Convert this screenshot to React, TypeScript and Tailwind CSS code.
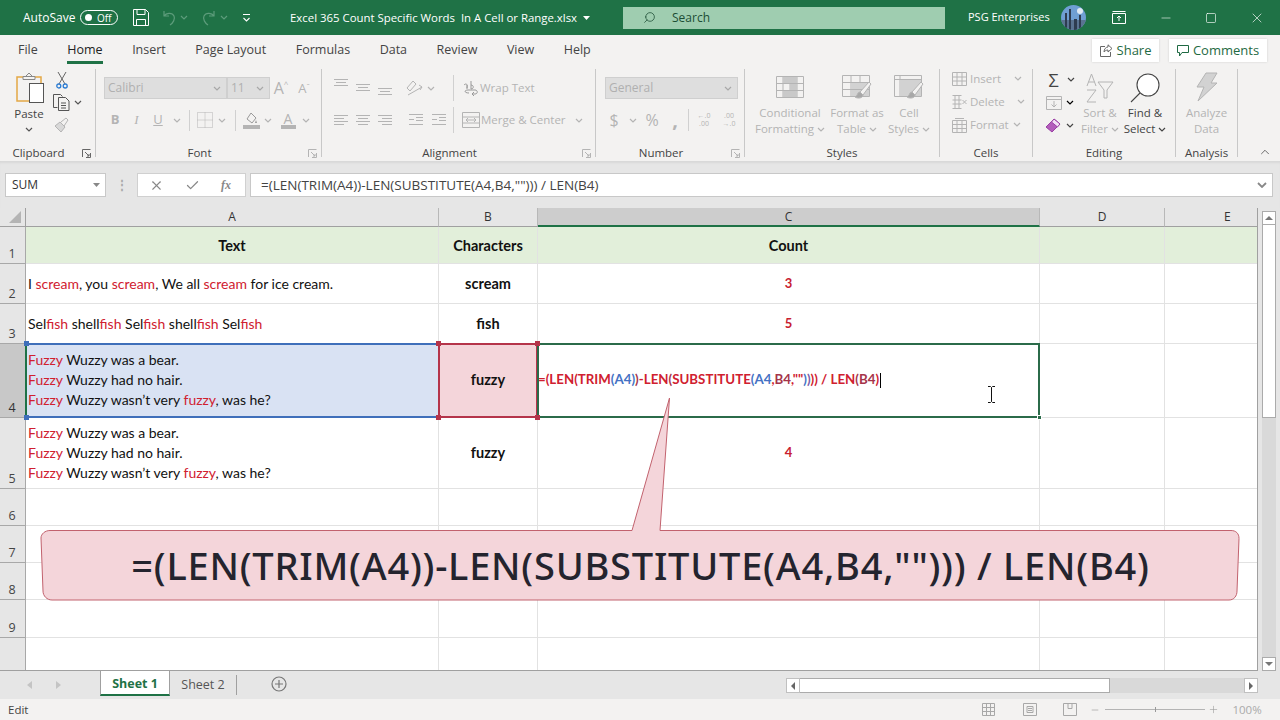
import React from "react";
import { Search, Minus, Square, X, Check, ChevronUp, Plus } from "lucide-react";

const Chev = ({ className = "text-[#b4b4b4]" }: { className?: string }) => (
  <svg width="8" height="5" viewBox="0 0 8 5" className={className} fill="none" stroke="currentColor" strokeWidth="1.2">
    <path d="M1 1l3 3 3-3" />
  </svg>
);

const Launcher = ({ dark = false }: { dark?: boolean }) => (
  <svg width="9" height="9" viewBox="0 0 9 9" fill="none" stroke={dark ? "#666" : "#b4b4b4"} strokeWidth="1">
    <path d="M.5 8V.5H8.5M8.5 4v4.5H4M3 3l4 4M7 5v2H5" />
  </svg>
);

const Lines = ({ lines }: { lines: number[][] }) => (
  <svg width="18" height="20" viewBox="0 0 18 20" stroke="#b4b4b4" strokeWidth="1">
    {lines.map(([a, b, y], i) => (
      <path key={i} d={`M${a} ${y}.5H${b}`} />
    ))}
  </svg>
);

const Sep = ({ className = "h-[22px]" }: { className?: string }) => <div className={`w-px bg-[#d0d0d0] ${className}`} />;

const Brush = ({ x, y }: { x: number; y: number }) => (
  <g transform={`translate(${x} ${y})`}>
    <path d="M14 0L5 10l3 3 8-11z" fill="#f3f2f1" stroke="#b4b4b4" />
    <path d="M5 10c-3 0-2 4-5 5 3 2 8 1 8-2z" fill="#a8a8a8" />
  </g>
);

const Group = ({ w, label, launcher, children }: { w: string; label: string; launcher?: boolean; children: React.ReactNode }) => (
  <div className={`${w} h-[88px] border-r border-[#c8c8c8] shrink-0`}>
    <div className="h-[78px] flow-root">{children}</div>
    <div className="flex h-[10px] leading-[12px] text-[#444] text-[11.5px]">
      <div className="flex-1 text-center">{label}</div>
      {launcher && (
        <div className="w-[18px] flex justify-center pt-[2px] h-[12px]">
          <Launcher dark={label === "Clipboard"} />
        </div>
      )}
    </div>
  </div>
);

const Combo = ({ w, text }: { w: string; text: string }) => (
  <div className={`${w} h-[22px] bg-[#dedede] border border-[#cfcfcf] flex items-center justify-between px-[3px] text-[#b0b0b0] text-[12px]`}>
    <span>{text}</span>
    <Chev className="text-[#a8a8a8] mr-[2px]" />
  </div>
);

function TitleBar() {
  return (
    <div className="h-[35px] bg-[#1f7246] flex items-center text-white text-[12px] shrink-0">
      <div className="w-[623px] flex items-center shrink-0 pl-[23px]">
        <span className="w-[57px]">AutoSave</span>
        <div className="w-[38px] h-[15px] rounded-full border border-white flex items-center pl-[4px]">
          <div className="w-[7px] h-[7px] rounded-full bg-white" />
          <span className="text-[10px] ml-[5px] leading-none">Off</span>
        </div>
        <svg width="16" height="17" viewBox="0 0 16 17" className="ml-[15px]" fill="none" stroke="#fff" strokeWidth="1">
          <path d="M.5.5h12l3 3v13H.5zM4 .5v5h8v-5M3.5 16.5v-6h9v6" />
        </svg>
        <svg width="16" height="16" viewBox="0 0 16 16" className="ml-[12px] text-[#5d9c7b]" fill="none" stroke="currentColor" strokeWidth="1.2">
          <path d="M3 1v5h5M3 6c2-3 8-4 10 0 1.5 3-1 7-4 9" />
        </svg>
        <Chev className="ml-[3px] text-[#5d9c7b]" />
        <svg width="16" height="16" viewBox="0 0 16 16" className="ml-[13px] text-[#5d9c7b]" fill="none" stroke="currentColor" strokeWidth="1.2">
          <path d="M13 1v5H8M13 6C11 3 5 2 3 6c-1.5 3 1 7 4 9" />
        </svg>
        <Chev className="ml-[3px] text-[#5d9c7b]" />
        <svg width="9" height="8" viewBox="0 0 9 8" className="ml-[14px]" fill="none" stroke="#fff" strokeWidth="1.1">
          <path d="M1 .5h7M1.5 4l3 3 3-3" />
        </svg>
        <span className="ml-[39px] whitespace-pre text-[11.4px]">Excel 365 Count Specific Words  In A Cell or Range.xlsx</span>
        <svg width="7" height="4" viewBox="0 0 7 4" className="ml-[6px]" fill="#fff">
          <path d="M0 0h7L3.5 4z" />
        </svg>
      </div>
      <div className="w-[322px] h-[22px] bg-[#9fcdb0] flex items-center pl-[20px] text-[#1d4d35] shrink-0">
        <Search size={13} strokeWidth={1.4} className="-scale-x-100" />
        <span className="ml-[16px]">Search</span>
      </div>
      <span className="ml-[23px] whitespace-nowrap text-[11px]">PSG Enterprises</span>
      <svg width="25" height="25" viewBox="0 0 25 25" className="ml-[11px] shrink-0">
        <defs>
          <clipPath id="av">
            <circle cx="12.5" cy="12.5" r="12.5" />
          </clipPath>
        </defs>
        <g clipPath="url(#av)">
          <rect width="25" height="25" fill="#6f9fd4" />
          <rect y="15" width="25" height="10" fill="#5a7391" />
          <path d="M4 25V8h2v17zM8 25V4h2v21zM13 25V14h3v11zM18 25V10h2v15z" fill="#2e3c50" />
          <circle cx="19" cy="6" r="3" fill="#dfe9f4" />
        </g>
      </svg>
      <svg width="14" height="13" viewBox="0 0 14 13" className="ml-[26px]" fill="none" stroke="#fff" strokeWidth="1">
        <path d="M.5 2.5h13v10H.5zM.5.5h13M7 10V5M5 7l2-2 2 2" />
      </svg>
      <Minus size={14} strokeWidth={1} className="ml-[33px]" />
      <Square size={12} strokeWidth={1.3} className="ml-[32px]" />
      <X size={16} strokeWidth={1} className="ml-[32px]" />
    </div>
  );
}

function TabsRow() {
  return (
    <div className="h-[30px] flex items-center pl-[18px] pt-[1px] gap-[29.5px] text-[12.5px] text-[#444] relative shrink-0">
      <span>File</span>
      <span className="relative text-[#222]">
        Home
        <span className="absolute left-0 right-0 top-[20px] h-[2.5px] bg-[#1f7246]" />
      </span>
      <span>Insert</span>
      <span>Page Layout</span>
      <span>Formulas</span>
      <span>Data</span>
      <span>Review</span>
      <span>View</span>
      <span>Help</span>
      <div className="ml-auto flex gap-[10px] pr-[13px]">
        <div className="w-[67px] h-[23px] bg-white shadow-[0_0_2px_#ccc] flex items-center justify-center gap-[4px] text-[#1f6a43] text-[13px]">
          <svg width="13" height="13" viewBox="0 0 13 13" fill="none" stroke="#666" strokeWidth="1">
            <path d="M5 2.5H.5v10h10V8M4 8c0-3 2-5 4-5V.8l4 3.7-4 3.5V6C6 6 5 7 4 8z" />
          </svg>
          Share
        </div>
        <div className="w-[98px] h-[23px] bg-white shadow-[0_0_2px_#ccc] flex items-center justify-center gap-[4px] text-[#1f6a43] text-[13px]">
          <svg width="12" height="12" viewBox="0 0 12 12" fill="none" stroke="#1f6a43" strokeWidth="1">
            <path d="M.5.5h11v7H5L2.5 11V7.5h-2z" />
          </svg>
          Comments
        </div>
      </div>
    </div>
  );
}

function Ribbon() {
  return (
    <div className="h-[96px] flex pt-[4px] text-[11.5px] whitespace-nowrap shrink-0">
      <Group w="w-[96px]" label="Clipboard" launcher>
        <div className="flex">
          <div className="w-[58px] flex flex-col items-center text-[#444]">
            <svg width="30" height="31" viewBox="0 0 30 31" fill="none" className="mt-[3px] ml-[1px]">
              <path d="M2 5h24v24H2z" fill="#f3f2f1" stroke="#e4a845" strokeWidth="1.5" />
              <path d="M10 5l4-4 4 4" fill="#f3f2f1" stroke="#888" />
              <path d="M8 4.5h12v3H8z" fill="#f3f2f1" stroke="#888" />
              <rect x="14.5" y="11.5" width="14" height="19" fill="#fff" stroke="#555" />
            </svg>
            <span className="mt-[3px] leading-[16px]">Paste</span>
            <Chev className="text-[#555] mt-[5px]" />
          </div>
          <div className="flex flex-col w-[36px]">
            <svg width="12" height="18" viewBox="0 0 12 18" fill="none" className="ml-[-2px] mt-[2px]">
              <path d="M2 1l7 12M10 1L3 13" stroke="#666" />
              <circle cx="2.8" cy="15" r="2" stroke="#2b7cd3" strokeWidth="1.3" />
              <circle cx="9.2" cy="15" r="2" stroke="#2b7cd3" strokeWidth="1.3" />
            </svg>
            <div className="flex items-center mt-[5px] -ml-[5px]">
              <svg width="17" height="17" viewBox="0 0 17 17" fill="none" stroke="#555" strokeWidth="1">
                <path d="M4.5 13.5H.5V.5h7l2 2M5.5 3.5h7L16 7v9.5H5.5zM8 9h5M8 11.5h5M8 14h5" />
              </svg>
              <Chev className="ml-[4px] text-[#555]" />
            </div>
            <svg width="15" height="16" viewBox="0 0 15 16" fill="none" className="mt-[6px] -ml-[4px]">
              <path d="M1 9l5-4 5 5-4 5C5 13 3 11 1 9z" fill="#d8d8d8" stroke="#b4b4b4" />
              <path d="M7 5l5-4 2 2-4 6" stroke="#b4b4b4" />
            </svg>
          </div>
        </div>
      </Group>

      <Group w="w-[226px]" label="Font" launcher>
        <div className="flex items-center mt-[8px] pl-[8px]">
          <Combo w="w-[123px]" text="Calibri" />
          <Combo w="w-[43px]" text="11" />
          <div className="w-[22px] flex justify-center text-[#b4b4b4] text-[16px] leading-none">A<span className="text-[8px]">^</span></div>
          <div className="w-[24px] flex justify-center text-[#b4b4b4] text-[13px] leading-none">A<span className="text-[8px]">ˇ</span></div>
        </div>
        <div className="flex items-center mt-[10px] h-[22px] pl-[8px] text-[#b4b4b4]">
          <div className="w-[22px] text-center font-bold text-[13px]">B</div>
          <div className="w-[21px] text-center italic text-[13px] font-['Liberation_Serif',serif]">I</div>
          <div className="w-[22px] text-center underline text-[13px]">U</div>
          <div className="w-[16px] flex justify-center"><Chev /></div>
          <Sep className="ml-[4px] h-[21px]" />
          <div className="ml-[3px] w-[24px] flex justify-center">
            <svg width="16" height="16" viewBox="0 0 16 16" fill="none" stroke="#b4b4b4" strokeDasharray="1 1">
              <path d="M.5.5h15v15H.5zM8 .5v15M.5 8h15" />
            </svg>
          </div>
          <div className="w-[10px] flex justify-center"><Chev /></div>
          <Sep className="ml-[8px] h-[21px]" />
          <div className="ml-[5px] w-[20px] flex justify-center">
            <svg width="17" height="17" viewBox="0 0 17 17" fill="none">
              <path d="M8 1l5 5-4 5-5-4z" stroke="#999" />
              <path d="M13 8l1 3h-2z" fill="#999" />
              <rect y="13" width="17" height="4" fill="#b4b4b4" />
            </svg>
          </div>
          <div className="w-[14px] flex justify-center"><Chev /></div>
          <div className="ml-[3px] w-[20px] flex flex-col items-center leading-[13px] text-[14px]">
            A
            <div className="w-[15px] h-[4px] bg-[#b4b4b4]" />
          </div>
          <div className="w-[16px] flex justify-center"><Chev /></div>
        </div>
      </Group>

      <Group w="w-[274px]" label="Alignment" launcher>
        <div className="flex items-center mt-[8px] h-[22px] pl-[8px] text-[#b4b4b4]">
          <div className="w-[22px] flex justify-center"><Lines lines={[[2, 16, 1], [4, 14, 4], [2, 16, 7]]} /></div>
          <div className="w-[22px] flex justify-center"><Lines lines={[[2, 16, 6], [4, 14, 9], [2, 16, 12]]} /></div>
          <div className="w-[22px] flex justify-center"><Lines lines={[[2, 16, 10], [4, 14, 13], [2, 16, 16]]} /></div>
          <Sep className="ml-[4px]" />
          <div className="ml-[2px] w-[24px] flex justify-center">
            <svg width="18" height="16" viewBox="0 0 18 16" fill="none" stroke="#b4b4b4">
              <path d="M1 8l6-7 3 3-6 7zM2 15l14-8M13 5l3 2-2 3" />
            </svg>
          </div>
          <div className="w-[8px] flex justify-center"><Chev /></div>
          <Sep className="ml-[18px] h-[26px]" />
          <div className="ml-[8px] w-[17px] flex justify-center">
            <svg width="16" height="17" viewBox="0 0 16 17" fill="none" stroke="#999">
              <path d="M1 5c2-2 4-1 3 3M4 5v4M8 1v8c3 0 3-4 0-4M6 13c-5 0-5-3-1-3h7c3 0 3 4 0 4H9l2-2M9 14l2 2" />
            </svg>
          </div>
          <span className="ml-[1px]">Wrap Text</span>
        </div>
        <div className="flex items-center mt-[10px] h-[22px] pl-[8px] text-[#b4b4b4]">
          <div className="w-[22px] flex justify-center"><Lines lines={[[2, 16, 5], [2, 12, 8], [2, 16, 11], [2, 12, 14]]} /></div>
          <div className="w-[22px] flex justify-center"><Lines lines={[[2, 16, 5], [4, 14, 8], [2, 16, 11], [4, 14, 14]]} /></div>
          <div className="w-[22px] flex justify-center"><Lines lines={[[2, 16, 5], [6, 16, 8], [2, 16, 11], [6, 16, 14]]} /></div>
          <Sep className="ml-[4px]" />
          <div className="ml-[3px] w-[24px] flex justify-center"><Lines lines={[[2, 16, 4], [9, 16, 7], [9, 16, 10], [2, 7, 9], [2, 16, 14]]} /></div>
          <div className="w-[22px] flex justify-center"><Lines lines={[[2, 16, 4], [9, 16, 7], [9, 16, 10], [2, 7, 9], [2, 16, 14]]} /></div>
          <Sep className="ml-[3px] h-[26px]" />
          <svg width="18" height="16" viewBox="0 0 18 16" fill="none" stroke="#b4b4b4" className="ml-[8px]">
            <path d="M.5.5h17v15H.5zM.5 5h17M.5 11h17M4 8h10M6 6l-2 2 2 2M12 6l2 2-2 2" />
          </svg>
          <span className="ml-[1px]">Merge &amp; Center</span>
          <Chev className="ml-[9px]" />
        </div>
      </Group>

      <Group w="w-[149px]" label="Number" launcher>
        <div className="mt-[8px] ml-[9px]"><Combo w="w-[133px]" text="General" /></div>
        <div className="flex items-center mt-[10px] h-[22px] pl-[8px] text-[#b4b4b4]">
          <div className="w-[20px] text-center text-[16px]">$</div>
          <div className="w-[18px] flex justify-center"><Chev /></div>
          <div className="w-[20px] text-center text-[16px]">%</div>
          <div className="w-[26px] text-center text-[20px] font-bold leading-[18px]">,</div>
          <Sep />
          <div className="ml-[3px] w-[24px] text-[7px] leading-[8px] text-center">←.0<br />.00</div>
          <div className="ml-[1px] w-[24px] text-[7px] leading-[8px] text-center">.00<br />→.0</div>
        </div>
      </Group>

      <Group w="w-[195px]" label="Styles">
        <div className="flex pl-[4px] text-[#b4b4b4] leading-[16px] text-center">
          <div className="w-[82px] flex flex-col items-center">
            <svg width="28" height="22" viewBox="0 0 28 22" fill="none" stroke="#b4b4b4" className="mt-[7px] mb-[7px]">
              <path d="M.5.5h27v21H.5z" />
              <path d="M.5 7.5h27M.5 14.5h27M7 .5v21M14 .5v21M21 .5v21" />
              <path d="M7 1h14v6H7zM14 8h7v6h-7zM7 15h14v6H7z" fill="#c9c9c9" stroke="none" />
            </svg>
            Conditional
            <div className="flex items-center gap-[3px]">Formatting <Chev /></div>
          </div>
          <div className="w-[52px] flex flex-col items-center">
            <svg width="30" height="24" viewBox="0 0 30 24" fill="none" stroke="#b4b4b4" className="mt-[6px] mb-[6px]">
              <path d="M.5.5h27v21H.5zM.5 7.5h27M.5 14.5h27M9 .5v21M18 .5v21" />
              <path d="M9 8h18v6H9zM9 15h18v6H9z" fill="#d2d2d2" stroke="none" />
              <Brush x={13} y={7} />
            </svg>
            Format as
            <div className="flex items-center gap-[3px]">Table <Chev /></div>
          </div>
          <div className="w-[52px] flex flex-col items-center">
            <svg width="30" height="24" viewBox="0 0 30 24" fill="none" stroke="#b4b4b4" className="mt-[6px] mb-[6px]">
              <path d="M.5.5h27v21H.5zM.5 4.5h27M6 .5v21" />
              <path d="M6 5h21v16H6z" fill="#d2d2d2" stroke="none" />
              <Brush x={13} y={7} />
            </svg>
            Cell
            <div className="flex items-center gap-[3px]">Styles <Chev /></div>
          </div>
        </div>
      </Group>

      <Group w="w-[93px]" label="Cells">
        <div className="flex flex-col pl-[12px] -mt-[2px] text-[#b4b4b4]">
          <div className="flex items-center h-[23px]">
            <svg width="15" height="14" viewBox="0 0 15 14" fill="none" stroke="#b4b4b4" className="mr-[3px]">
              <path d="M.5.5h14v13H.5zM5 .5v13M10 .5v13M.5 5h14M.5 9h14" />
            </svg>
            Insert
            <Chev className="ml-[13px]" />
          </div>
          <div className="flex items-center h-[23px]">
            <svg width="15" height="14" viewBox="0 0 15 14" fill="none" stroke="#b4b4b4" className="mr-[3px]">
              <path d="M.5.5h9M.5 13.5h9M3 .5v13M7 .5v13M.5 5h9M.5 9h9M10.5 5l4 4M14.5 5l-4 4" />
            </svg>
            Delete
            <Chev className="ml-[12px]" />
          </div>
          <div className="flex items-center h-[23px]">
            <svg width="15" height="16" viewBox="0 0 15 16" fill="none" stroke="#b4b4b4" className="mr-[3px]">
              <path d="M.5 3.5h14v12H.5zM3 1.5h9M5 3.5v12M10 3.5v12M.5 7.5h14M.5 11.5h14" />
            </svg>
            Format
            <Chev className="ml-[4px]" />
          </div>
        </div>
      </Group>

      <Group w="w-[143px]" label="Editing">
        <div className="flex">
          <div className="flex flex-col pl-[13px] w-[45px] -mt-[1px] shrink-0">
            <div className="flex items-center h-[23px]">
              <span className="w-[15px] text-center text-[#444] text-[18px] leading-none">Σ</span>
              <Chev className="ml-[6px] text-[#444]" />
            </div>
            <div className="flex items-center h-[23px]">
              <svg width="16" height="14" viewBox="0 0 16 14" fill="none" stroke="#b4b4b4">
                <path d="M.5.5h15v13H.5zM.5 3.5h15M8 5v6M5.5 8.5L8 11l2.5-2.5" />
              </svg>
              <Chev className="ml-[4px]" />
            </div>
            <div className="flex items-center h-[23px]">
              <svg width="16" height="15" viewBox="0 0 16 15" className="-ml-[1px]">
                <path d="M1 9l8-8 6 5-8 8z" fill="#b35dbb" stroke="#9a3fa5" />
                <path d="M6.5 4l6 5 2.5-3-6-5z" fill="#f3dff5" stroke="#9a3fa5" />
              </svg>
              <Chev className="ml-[5px] text-[#444]" />
            </div>
          </div>
          <div className="w-[44px] flex flex-col items-center text-[#b4b4b4] leading-[16px]">
            <svg width="30" height="30" viewBox="0 0 30 30" fill="none" stroke="#b4b4b4" className="mt-[4px] mb-[2px]">
              <path d="M2 13L6.5 1 11 13M3.5 9h6M2 17h9L2 29h9M13 9h15l-6 8v8h-3v-8z" />
            </svg>
            Sort &amp;
            <div className="flex items-center gap-[3px]">Filter <Chev /></div>
          </div>
          <div className="w-[46px] flex flex-col items-center text-[#444] leading-[16px]">
            <svg width="30" height="30" viewBox="0 0 30 30" fill="none" stroke="#444" strokeWidth="1.1" className="mt-[4px] mb-[2px]">
              <circle cx="18" cy="12" r="11" fill="#fff" />
              <path d="M10 20L1 29" />
            </svg>
            Find &amp;
            <div className="flex items-center gap-[3px]">Select <Chev className="text-[#444]" /></div>
          </div>
        </div>
      </Group>

      <Group w="w-[62px]" label="Analysis">
        <div className="flex flex-col items-center text-[#b4b4b4] leading-[16px]">
          <svg width="24" height="30" viewBox="0 0 24 30" className="mt-[3px] mb-[3px]">
            <path d="M11 1h11l-6 10h6L3 29l6-14H2z" fill="#d2d2d2" stroke="#b4b4b4" />
          </svg>
          Analyze
          <span>Data</span>
        </div>
      </Group>
      <div className="flex-1 h-[90px] flex items-end justify-end pr-[8px]">
        <ChevronUp size={14} strokeWidth={1.3} className="text-[#444]" />
      </div>
    </div>
  );
}

function FormulaBar() {
  return (
    <div className="h-[47px] bg-[#e6e6e6] shadow-[inset_0_3px_2px_-1px_#d8d8d8] pt-[12px] flex items-start text-[12px] text-[#333] shrink-0">
      <div className="ml-[5px] w-[101px] h-[24px] bg-white border border-[#c8c8c8] flex items-center justify-between pl-[6px] pr-[5px]">
        SUM
        <svg width="7" height="4" viewBox="0 0 7 4" fill="#888"><path d="M0 0h7L3.5 4z" /></svg>
      </div>
      <div className="w-[31px] h-[24px] flex items-center justify-center text-[#aaa] text-[12px] font-bold">⋮</div>
      <div className="w-[109px] h-[24px] bg-white border border-[#d0d0d0] flex items-center text-[#888]">
        <X size={15} strokeWidth={1.8} className="ml-[11px]" />
        <Check size={15} strokeWidth={2} className="ml-[21px]" />
        <span className="ml-[21px] italic font-bold text-[12px] font-['Liberation_Serif',serif]">fx</span>
      </div>
      <div className="ml-[4px] w-[1023px] h-[24px] bg-white border border-[#c8c8c8] flex items-center justify-between pl-[10px] pr-[5px]">
        <span className="text-[#444] text-[13.5px]">=(LEN(TRIM(A4))-LEN(SUBSTITUTE(A4,B4,""))) / LEN(B4)</span>
        <svg width="10" height="6" viewBox="0 0 10 6" fill="none" stroke="#888" strokeWidth="1.8"><path d="M1 1l4 4 4-4" /></svg>
      </div>
    </div>
  );
}

const RowHead = ({ n, active = false }: { n: number; active?: boolean }) => (
  <div className={`border-r border-b border-[#a8a8a8] flex items-end justify-center pr-[1px] pb-[1px] text-[12.5px] leading-[16px] font-['Open_Sans',sans-serif] ${active ? "bg-[#c8c8c8] text-[#333]" : "bg-[#e6e6e6] text-[#444]"}`}>
    {n}
  </div>
);

const ColHead = ({ c, active = false, last = false }: { c: string; active?: boolean; last?: boolean }) => (
  <div className={`border-b flex items-center text-[12px] text-[#333] font-['Open_Sans',sans-serif] ${active ? "bg-[#cdcdcd] border-[#1f7246] border-b-2" : "bg-[#e6e6e6] border-[#a0a0a0]"} ${last ? "pl-[59px]" : "justify-center border-r border-r-[#b8b8b8]"}`}>
    {c}
  </div>
);

const Cell = ({ className = "", children }: { className?: string; children?: React.ReactNode }) => (
  <div className={`border-r border-b border-[#e2e2e2] relative ${className}`}>{children}</div>
);

const R = ({ children }: { children: React.ReactNode }) => <span className="text-[#d0202f]">{children}</span>;

const FuzzyLines = ({ up = false }: { up?: boolean }) => (
  <div className={`pl-[2px] leading-[20px] ${up ? "-mt-[2px]" : ""}`}>
    <div><R>Fuzzy</R> Wuzzy was a bear.</div>
    <div><R>Fuzzy</R> Wuzzy had no hair.</div>
    <div><R>Fuzzy</R> Wuzzy wasn’t very <R>fuzzy</R>, was he?</div>
  </div>
);

const Handle = ({ className }: { className: string }) => <div className={`absolute w-[5px] h-[5px] z-10 ${className}`} />;

const emptyRow = (n: number, extra = "") => (
  <React.Fragment key={n}>
    {n > 0 ? <RowHead n={n} /> : <div className="border-r border-[#a8a8a8] bg-[#e6e6e6]" />}
    <Cell className={extra} />
    <Cell className={extra} />
    <Cell className={extra} />
    <Cell className={extra} />
    <Cell className={`border-r-0 ${extra}`} />
  </React.Fragment>
);

const boldCell = "font-bold text-[14.5px] flex items-center justify-center";
const countCell = "font-bold text-[13px] flex items-center justify-center text-[#c8202f]";

function Sheet() {
  return (
    <div className="grid grid-cols-[26px_413px_99px_502px_125px_92px] grid-rows-[19px_37px_40px_40px_74px_71px_37px_37px_37px_38px_32px] w-[1258px] h-[463px] bg-white border-r border-b border-[#a0a0a0] font-['Lato',sans-serif] text-[14px] text-[#111] shrink-0">
      <div className="bg-[#e6e6e6] border-r border-b border-[#a0a0a0] flex items-end justify-end pr-[4px] pb-[3px]">
        <svg width="12" height="12" viewBox="0 0 12 12"><path d="M12 0v12H0z" fill="#b4b4b4" /></svg>
      </div>
      <ColHead c="A" />
      <ColHead c="B" />
      <ColHead c="C" active />
      <ColHead c="D" />
      <ColHead c="E" last />

      <RowHead n={1} />
      <Cell className={`bg-[#e2efda] pt-[1px] ${boldCell}`}>Text</Cell>
      <Cell className={`bg-[#e2efda] pt-[1px] ${boldCell}`}>Characters</Cell>
      <Cell className={`bg-[#e2efda] pt-[1px] ${boldCell}`}>Count</Cell>
      <Cell className="bg-[#e2efda]" />
      <Cell className="bg-[#e2efda] border-r-0" />

      <RowHead n={2} />
      <Cell className="flex items-center pl-[2px]">
        <span>I <R>scream</R>, you <R>scream</R>, We all <R>scream</R> for ice cream.</span>
      </Cell>
      <Cell className={boldCell}>scream</Cell>
      <Cell className={countCell}>3</Cell>
      <Cell />
      <Cell className="border-r-0" />

      <RowHead n={3} />
      <Cell className="flex items-center pl-[2px]">
        <span>Sel<R>fish</R> shell<R>fish</R> Sel<R>fish</R> shell<R>fish</R> Sel<R>fish</R></span>
      </Cell>
      <Cell className={boldCell}>fish</Cell>
      <Cell className={countCell}>5</Cell>
      <Cell />
      <Cell className="border-r-0" />

      <RowHead n={4} active />
      <Cell className="bg-[#d9e2f3] flex items-center">
        <FuzzyLines up />
        <div className="absolute -top-px -left-px -right-px -bottom-px border-y-2 border-[#3f6fba] border-l-2 border-l-[#1f7246] pointer-events-none" />
        <Handle className="-top-[3px] -left-[2px] bg-[#3f6fba]" />
        <Handle className="-bottom-[3px] -left-[2px] bg-[#3f6fba]" />
      </Cell>
      <Cell className={`bg-[#f4d5da] ${boldCell} pb-[2px]`}>
        fuzzy
        <div className="absolute -top-px -left-px -right-px -bottom-px border-2 border-[#b5344a] pointer-events-none" />
        <Handle className="-top-[3px] -left-[3px] bg-[#b5344a]" />
        <Handle className="-top-[3px] -right-[3px] bg-[#b5344a]" />
        <Handle className="-bottom-[3px] -left-[3px] bg-[#b5344a]" />
        <Handle className="-bottom-[3px] -right-[3px] bg-[#b5344a]" />
      </Cell>
      <Cell className="font-bold flex items-center pb-[1px] text-[13.3px] text-[#d0202f] whitespace-pre">
        <div>
          =(LEN(TRIM<span className="text-[#4472c4]">(A4)</span><span className="text-[#a5344a]">)</span>-LEN<span className="text-[#a5344a]">(</span>SUBSTITUTE<span className="text-[#4472c4]">(A4</span>,<span className="text-[#a5344a]">B4</span>,""<span className="text-[#4472c4]">)</span><span className="text-[#7a5ca8]">)</span>)) / LEN<span className="text-[#a5344a]">(B4</span>)
          <span className="inline-block w-px h-[15px] bg-black align-middle ml-px" />
        </div>
        <div className="absolute -top-px -left-px -right-px -bottom-px border-2 border-[#2b6b4a] pointer-events-none" />
        <Handle className="-bottom-[3px] -right-[3px] bg-[#2b6b4a] border border-white" />
      </Cell>
      <Cell />
      <Cell className="border-r-0" />

      <RowHead n={5} />
      <Cell className="flex items-center"><FuzzyLines /></Cell>
      <Cell className={boldCell}>fuzzy</Cell>
      <Cell className={countCell}>4</Cell>
      <Cell />
      <Cell className="border-r-0" />

      {[6, 7, 8, 9].map((n) => emptyRow(n))}
      {emptyRow(0, "border-b-0")}
    </div>
  );
}

function VScroll() {
  return (
    <div className="w-[22px] h-[463px] pt-[3px] pl-[4px] flex flex-col shrink-0">
      <div className="w-[14px] h-[14px] bg-white border border-[#ababab] flex items-center justify-center">
        <svg width="8" height="4" viewBox="0 0 8 4" fill="#777"><path d="M0 4h8L4 0z" /></svg>
      </div>
      <div className="w-[14px] h-[193px] bg-white border border-[#ababab] border-t-0" />
      <div className="w-[14px] flex-1 bg-[#d9d9d9]" />
      <div className="w-[14px] h-[14px] bg-white border border-[#ababab] flex items-center justify-center">
        <svg width="8" height="4" viewBox="0 0 8 4" fill="#777"><path d="M0 0h8L4 4z" /></svg>
      </div>
    </div>
  );
}

function SheetTabs() {
  return (
    <div className="h-[28px] bg-[#e6e6e6] flex text-[12.5px] shrink-0">
      <div className="w-[100px] flex items-center pl-[27px] gap-[24px]">
        <svg width="5" height="8" viewBox="0 0 5 8" fill="#c4c4c4"><path d="M5 0v8L0 4z" /></svg>
        <svg width="5" height="8" viewBox="0 0 5 8" fill="#c4c4c4"><path d="M0 0v8l5-4z" /></svg>
      </div>
      <div className="w-[70px] h-[25px] pt-[3px] bg-white border-x border-[#a0a0a0] border-b-2 border-b-[#1f7246] flex items-center justify-center font-bold text-[#1f7246]">Sheet 1</div>
      <div className="w-[67px] h-[20px] mt-[4px] border-r border-[#a0a0a0] flex items-center justify-center text-[#555]">Sheet 2</div>
      <svg width="16" height="16" viewBox="0 0 16 16" fill="none" stroke="#777" className="ml-[34px] mt-[5px]" strokeWidth="1.2">
        <circle cx="8" cy="8" r="7" />
        <path d="M8 4v8M4 8h8" />
      </svg>
      <div className="ml-[499px] mt-[7px] flex h-[15px] w-[472px]">
        <div className="w-[14px] bg-white border border-[#c0c0c0] flex items-center justify-center">
          <svg width="4" height="8" viewBox="0 0 4 8" fill="#666"><path d="M4 0v8L0 4z" /></svg>
        </div>
        <div className="w-[310px] bg-white border border-[#ababab] border-l-0" />
        <div className="flex-1 bg-[#d9d9d9]" />
        <div className="w-[14px] bg-white border border-[#c0c0c0] flex items-center justify-center">
          <svg width="4" height="8" viewBox="0 0 4 8" fill="#666"><path d="M0 0v8l4-4z" /></svg>
        </div>
      </div>
    </div>
  );
}

function StatusBar() {
  return (
    <div className="h-[21px] bg-[#f3f2f1] flex items-center text-[11.5px] text-[#444] shrink-0 pl-[8px]">
      <span>Edit</span>
      <svg width="13" height="13" viewBox="0 0 13 13" fill="none" stroke="#a8a8a8" className="ml-[954px]">
        <path d="M.5.5h12v12H.5zM4.5.5v12M8.5.5v12M.5 4.5h12M.5 8.5h12" />
      </svg>
      <svg width="14" height="13" viewBox="0 0 14 13" fill="none" stroke="#a8a8a8" className="ml-[28px]">
        <path d="M.5.5h13v12H.5zM4 3.5h6v6H4zM5 5.5h4M5 7.5h4" />
      </svg>
      <svg width="14" height="13" viewBox="0 0 14 13" fill="none" stroke="#a8a8a8" className="ml-[26px]">
        <path d="M.5.5h13v12H.5zM5 .5v5h4v-5" />
      </svg>
      <Minus size={10} strokeWidth={1.5} className="ml-[13px] text-[#999]" />
      <div className="ml-[5px] w-[100px] h-px bg-[#b4b4b4] relative">
        <div className="absolute left-[50px] -top-[2px] w-px h-[5px] bg-[#999]" />
      </div>
      <Plus size={11} strokeWidth={1.3} className="ml-[3px] text-[#999]" />
      <span className="ml-[13px] text-[#aaa]">100%</span>
    </div>
  );
}

function Callout() {
  return (
    <div className="absolute left-[40px] top-[397px] w-[1201px] h-[206px] pointer-events-none">
      <svg width="1201" height="206" viewBox="0 0 1201 206" className="absolute inset-0">
        <path
          d="M10 133.5H592L629.5 1 620 133.5H1191c5 0 8 3 8 8L1197 194c0 5-3 9-8 9H12c-5 0-9-4-9-9L1 141c0-4 4-7.5 9-7.5z"
          fill="#f4d5da"
          stroke="#c2626e"
          strokeWidth="1"
        />
      </svg>
      <div className="absolute left-0 right-0 top-[133px] h-[70px] flex items-center justify-center font-['Noto_Sans',sans-serif] font-medium text-[38px] tracking-[0.77px] text-[#24242e] whitespace-pre">
        =(LEN(TRIM(A4))-LEN(SUBSTITUTE(A4,B4,""))) / LEN(B4)
      </div>
    </div>
  );
}

export default function App() {
  return (
    <div className="relative w-[1280px] h-[720px] overflow-hidden bg-[#f3f2f1] flex flex-col font-['Open_Sans',sans-serif]">
      <TitleBar />
      <TabsRow />
      <Ribbon />
      <FormulaBar />
      <div className="flex bg-[#e6e6e6] h-[463px] shrink-0">
        <Sheet />
        <VScroll />
      </div>
      <SheetTabs />
      <StatusBar />
      <Callout />
      <svg width="9" height="17" viewBox="0 0 9 17" fill="none" stroke="#111" className="absolute left-[987px] top-[386px]">
        <path d="M1 .5h2.5L4.5 1.5 5.5.5H8M4.5 1.5v14M1 16.5h2.5l1-1 1 1H8" />
      </svg>
    </div>
  );
}
